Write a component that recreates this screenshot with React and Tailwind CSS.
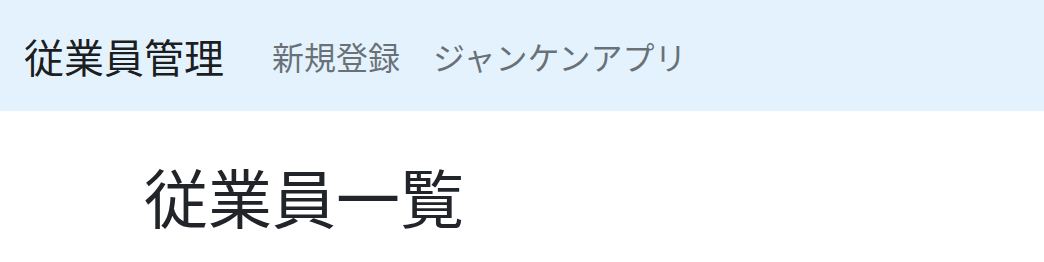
export default function App() {
  return (
    <div className="min-h-[262px] bg-white" style={{ fontFamily: '"Noto Sans CJK JP", "Noto Sans", sans-serif' }}>
      <nav className="h-[111px] bg-[#e3f2fd] flex items-center pl-[24px]">
        <a className="text-[40px] leading-none text-black/90">従業員管理</a>
        <ul className="flex items-center ml-[48px] gap-[33px]">
          <li className="text-[32px] leading-none text-black/55">新規登録</li>
          <li className="text-[32px] leading-none text-black/55">ジャンケンアプリ</li>
        </ul>
      </nav>
      <main className="pl-[144px] pt-[46px]">
        <h1 className="text-[64px] leading-[1.2] text-[#212529]">従業員一覧</h1>
      </main>
    </div>
  );
}
